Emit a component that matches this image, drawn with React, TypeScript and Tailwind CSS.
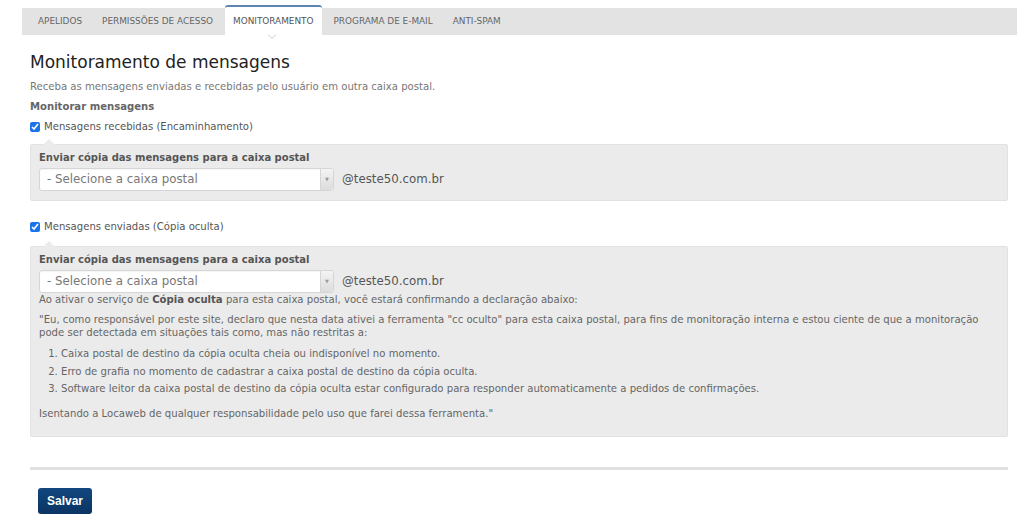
import React from "react";

const tabs = ["APELIDOS", "PERMISSÕES DE ACESSO", "MONITORAMENTO", "PROGRAMA DE E-MAIL", "ANTI-SPAM"];

const MailboxSelect = () => (
  <div className="flex items-center gap-[8px]">
    <div className="flex h-[23px] w-[295px] items-center rounded-[3px] border border-[#d6d6d6] bg-white shadow-[inset_0_1px_1px_rgba(0,0,0,0.04)]">
      <span className="flex-1 pl-[7px] text-[11.8px] text-[#777]">- Selecione a caixa postal</span>
      <span className="flex h-full w-[13px] items-center justify-center rounded-r-[3px] border-l border-[#d6d6d6] bg-gradient-to-b from-[#f4f4f4] to-[#dcdcdc] text-[5px] text-[#999]">
        ▼
      </span>
    </div>
    <span className="text-[11.8px] text-[#555]">@teste50.com.br</span>
  </div>
);

const Panel = ({ children }: { children: React.ReactNode }) => (
  <div className="relative rounded-[2px] border border-[#e2e2e2] bg-[#ebebeb] px-[8px] pt-[6px]">
    <span className="absolute -top-[6px] left-[12px] h-0 w-0 border-x-[6px] border-b-[6px] border-x-transparent border-b-[#ebebeb]" />
    <div className="text-[10px] font-bold leading-[13px] text-[#555]">Enviar cópia das mensagens para a caixa postal</div>
    {children}
  </div>
);

const Check = ({ label }: { label: string }) => (
  <label className="flex h-[13px] items-center gap-[4px] text-[10.1px] text-[#555]">
    <input type="checkbox" defaultChecked className="m-0 h-[10px] w-[10px] accent-[#1a73e8]" />
    {label}
  </label>
);

export default function App() {
  return (
    <div className="min-h-[521px] bg-white pt-[8px] text-[#666]" style={{ fontFamily: '"DejaVu Sans", Verdana, sans-serif' }}>
      <div className="ml-[22px] mr-[7px] flex h-[27px] items-stretch bg-[#e3e3e3] pl-[6px]">
        {tabs.map((t) =>
          t === "MONITORAMENTO" ? (
            <div key={t} className="relative -mt-[3px] mx-[2px] flex items-center rounded-t-[3px] border-t-2 border-[#5f84ad] bg-white px-[8px] pt-[1px] text-[8.9px] text-[#555]">
              {t}
              <span className="absolute left-1/2 top-full -ml-[4px] -mt-[3px] h-[6px] w-[6px] rotate-45 border-b border-r border-[#dcdcdc] bg-white" />
            </div>
          ) : (
            <div key={t} className="flex items-center px-[10px] text-[8.9px] text-[#666]">
              {t}
            </div>
          )
        )}
      </div>

      <div className="ml-[30px] mr-[16px]">
        <h1 className="mt-[16px] text-[17px] leading-[22px] text-[#222]">Monitoramento de mensagens</h1>
        <p className="mt-[7px] text-[10.1px] leading-[13px] text-[#777]">Receba as mensagens enviadas e recebidas pelo usuário em outra caixa postal.</p>
        <div className="mt-[7px] text-[10.1px] font-bold leading-[13px] text-[#666]">Monitorar mensagens</div>
        <div className="mt-[7px]">
          <Check label="Mensagens recebidas (Encaminhamento)" />
        </div>
        <div className="mt-[11px]">
          <Panel>
            <div className="mb-[9px] mt-[4px]">
              <MailboxSelect />
            </div>
          </Panel>
        </div>
        <div className="mt-[19px]">
          <Check label="Mensagens enviadas (Cópia oculta)" />
        </div>
        <div className="mt-[13px]">
          <Panel>
            <div className="mt-[4px]">
              <MailboxSelect />
            </div>
            <div className="pb-[16px] text-[10.1px] leading-[13px] text-[#666]">
              <p>
                Ao ativar o serviço de <b className="text-[#555]">Cópia oculta</b> para esta caixa postal, você estará confirmando a declaração abaixo:
              </p>
              <p className="mt-[7px]">
                "Eu, como responsável por este site, declaro que nesta data ativei a ferramenta "cc oculto" para esta caixa postal, para fins de monitoração interna e estou ciente de que a monitoração pode ser detectada em situações tais como, mas não restritas a:
              </p>
              <ol className="mt-[6px] list-decimal pl-[22px] leading-[17.5px]">
                <li>Caixa postal de destino da cópia oculta cheia ou indisponível no momento.</li>
                <li>Erro de grafia no momento de cadastrar a caixa postal de destino da cópia oculta.</li>
                <li>Software leitor da caixa postal de destino da cópia oculta estar configurado para responder automaticamente a pedidos de confirmações.</li>
              </ol>
              <p className="mt-[9px]">Isentando a Locaweb de qualquer responsabilidade pelo uso que farei dessa ferramenta."</p>
            </div>
          </Panel>
        </div>
        <div className="mt-[30px] h-[3px] bg-[#e0e0e0]" />
        <button
          className="ml-[8px] mt-[18px] h-[26px] rounded-[3px] bg-gradient-to-b from-[#12477f] to-[#0a3463] px-[9px] text-[12px] font-bold text-white"
          style={{ fontFamily: '"Liberation Sans", Arial, sans-serif' }}
        >
          Salvar
        </button>
      </div>
    </div>
  );
}
